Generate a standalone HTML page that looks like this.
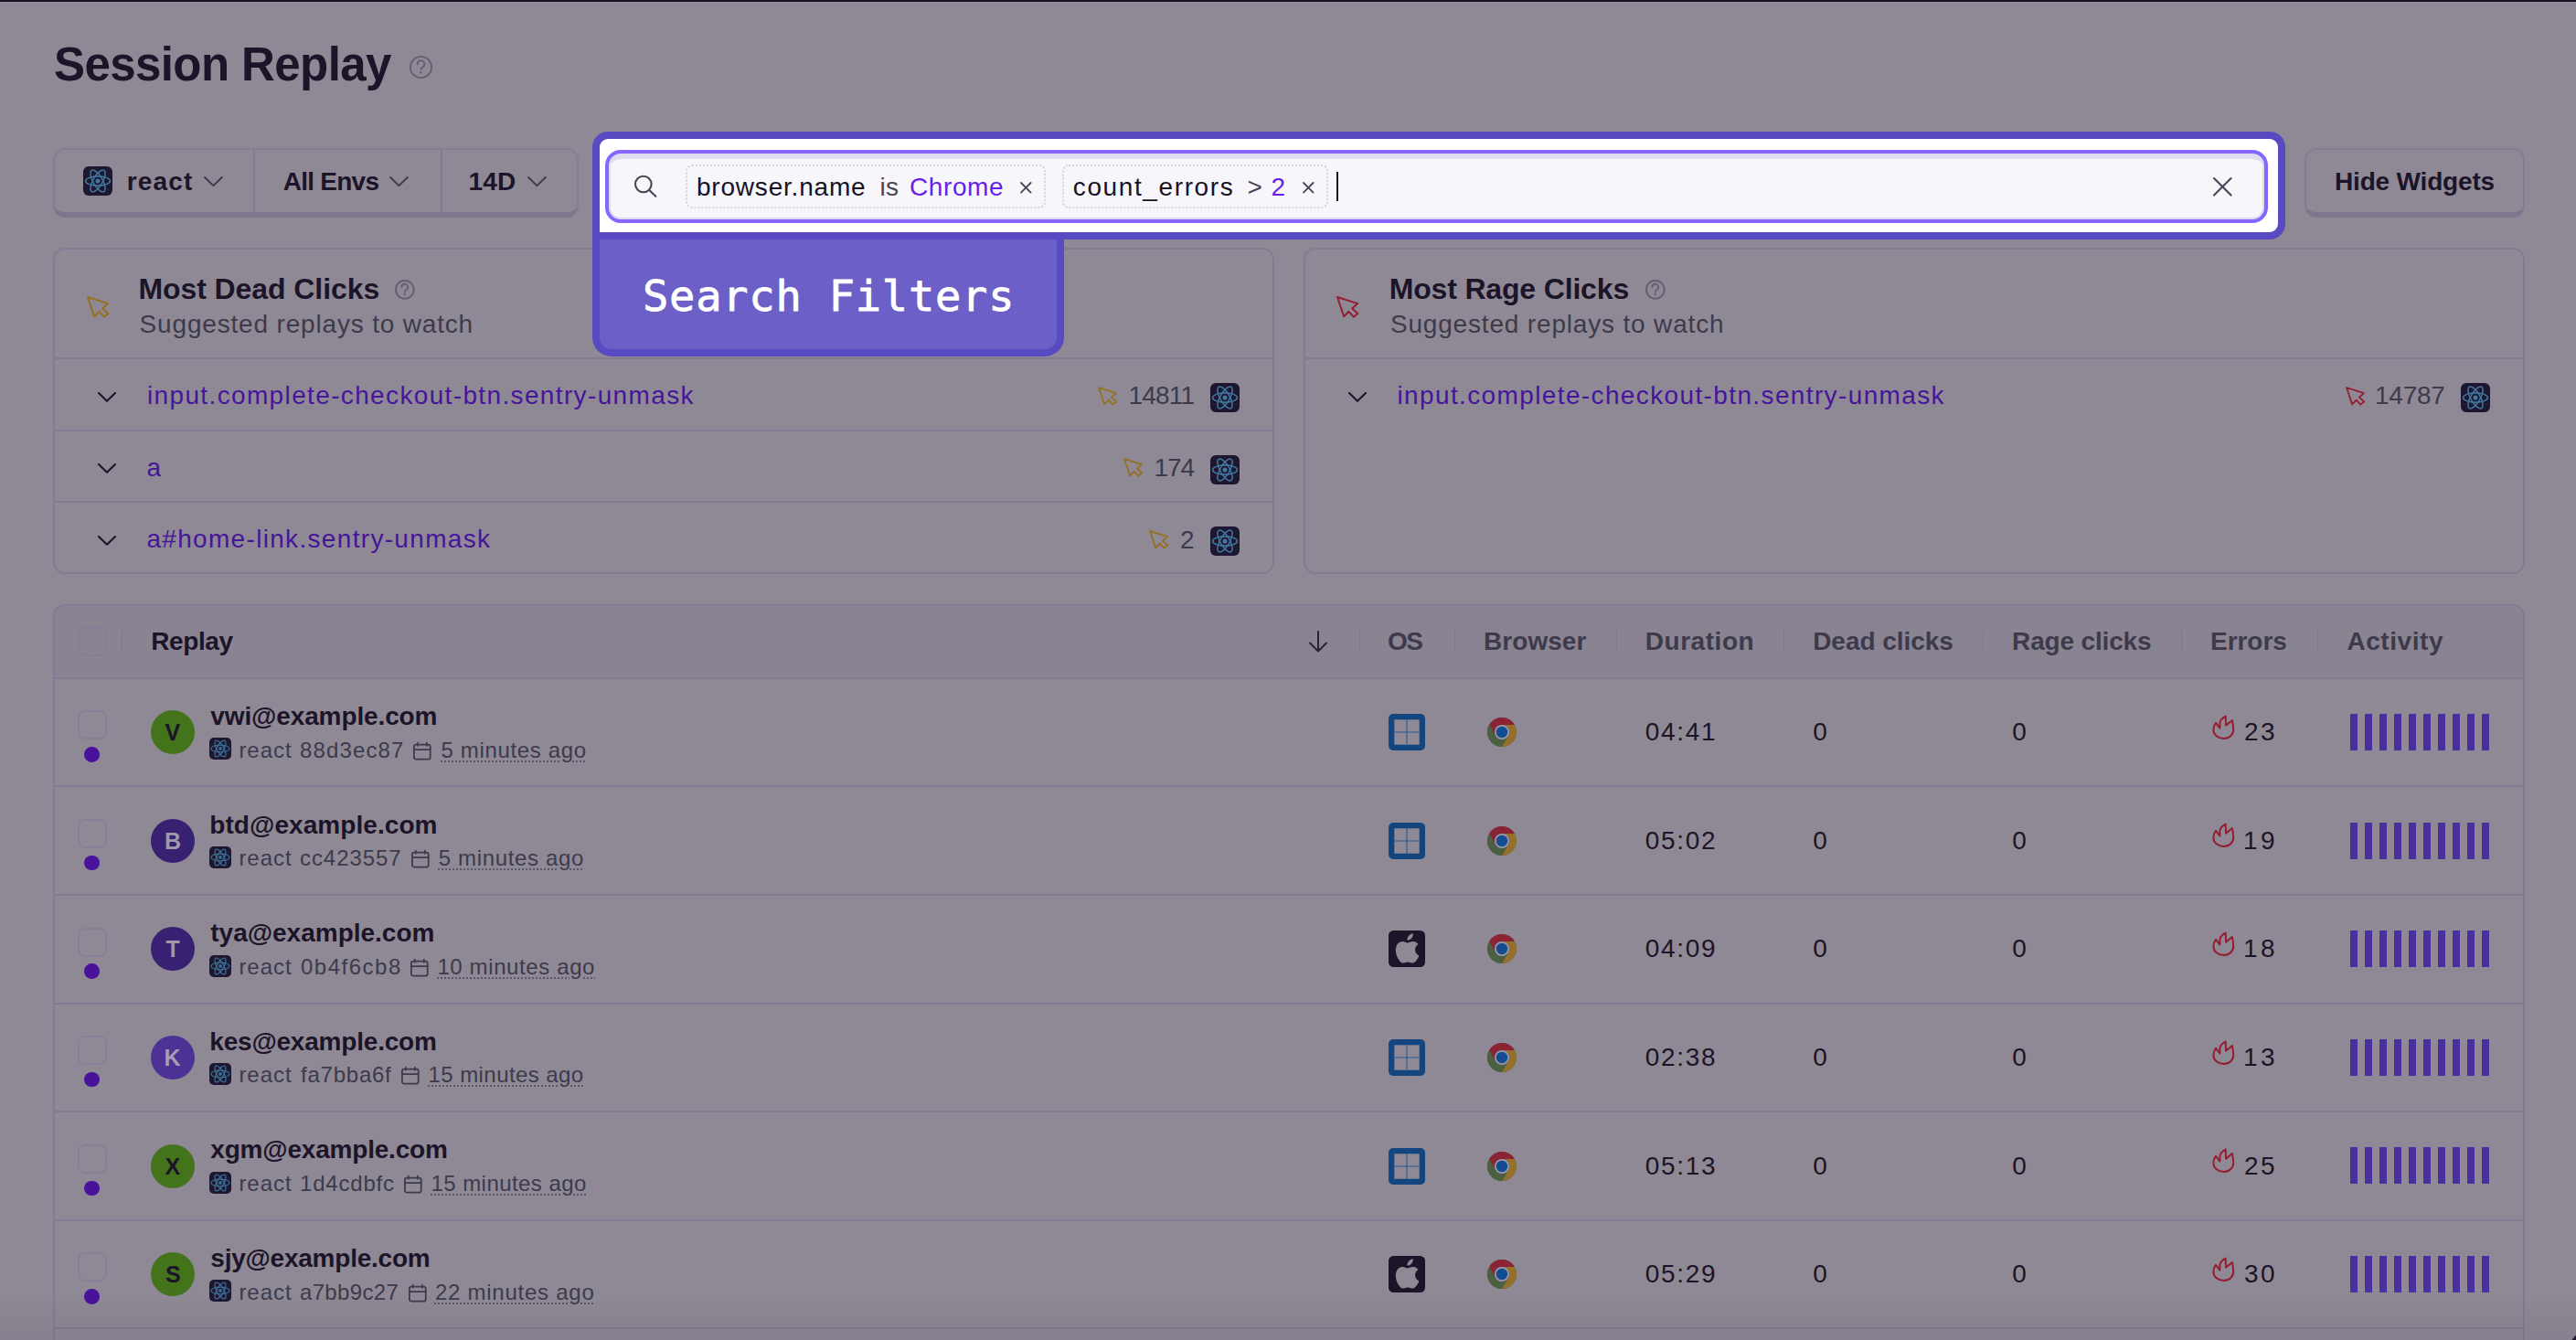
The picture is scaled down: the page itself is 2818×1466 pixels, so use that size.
<!DOCTYPE html>
<html lang="en"><head><meta charset="utf-8"><title>Session Replay</title>
<style>html,body{margin:0;padding:0}body{width:2818px;height:1466px;overflow:hidden;position:relative;background:#8F8995;font-family:'Liberation Sans',sans-serif}svg{overflow:visible}</style></head>
<body>
<div style="position:absolute;left:0px;top:0px;width:2818px;height:1px;background:#1C1424"></div>
<div style="position:absolute;left:0px;top:1px;width:2818px;height:1px;background:#150D1F"></div>
<div style="position:absolute;left:0px;top:2px;width:2818px;height:1px;background:#9993A0"></div>
<svg style="position:absolute;left:445.8px;top:59.0px" width="29.0" height="29.0" viewBox="-14.5 -14.5 29.0 29.0"><circle r="11.6" fill="none" stroke="#645D70" stroke-width="1.8"/><path d="M-3.88 -3.00 a3.88 3.88 0 1 1 5.88 3.00 q-2.00 0.88 -2.00 2.50" fill="none" stroke="#645D70" stroke-width="1.7" stroke-linecap="round"/><circle cy="5.75" r="1.25" fill="#645D70"/></svg>
<div style="position:absolute;left:58px;top:162px;width:575px;height:76px;box-sizing:border-box;border:2px solid #857D95;border-bottom:6px solid #7E768D;border-radius:13px"></div>
<div style="position:absolute;left:277px;top:164px;width:2px;height:68px;background:#837B93"></div>
<div style="position:absolute;left:481.5px;top:164px;width:2px;height:68px;background:#837B93"></div>
<svg style="position:absolute;left:90.5px;top:182px" width="32" height="32" viewBox="0 0 32 32"><rect width="32" height="32" rx="6" fill="#1D1730"/><g fill="none" stroke="#42769E" stroke-width="1.54"><ellipse cx="16.0" cy="16.0" rx="13.44" ry="5.12"/><ellipse cx="16.0" cy="16.0" rx="13.44" ry="5.12" transform="rotate(60 16.0 16.0)"/><ellipse cx="16.0" cy="16.0" rx="13.44" ry="5.12" transform="rotate(120 16.0 16.0)"/></g><circle cx="16.0" cy="16.0" r="2.56" fill="#42769E"/></svg>
<svg style="position:absolute;left:221.8px;top:192.3px" width="22.8" height="13.2" viewBox="-2 -2 22.8 13.2"><path d="M0 0 L9.4 9.2 L18.8 0" fill="none" stroke="#3D3A4C" stroke-width="1.9" stroke-linecap="round" stroke-linejoin="round"/></svg>
<svg style="position:absolute;left:425.4px;top:192.3px" width="22.8" height="13.2" viewBox="-2 -2 22.8 13.2"><path d="M0 0 L9.4 9.2 L18.8 0" fill="none" stroke="#3D3A4C" stroke-width="1.9" stroke-linecap="round" stroke-linejoin="round"/></svg>
<svg style="position:absolute;left:576px;top:192.3px" width="22.8" height="13.2" viewBox="-2 -2 22.8 13.2"><path d="M0 0 L9.4 9.2 L18.8 0" fill="none" stroke="#3D3A4C" stroke-width="1.9" stroke-linecap="round" stroke-linejoin="round"/></svg>
<div style="position:absolute;left:2521px;top:162px;width:241px;height:76px;box-sizing:border-box;border:2px solid #857D95;border-bottom:6px solid #7E768D;border-radius:13px"></div>
<div style="position:absolute;left:58px;top:271px;width:1336px;height:357px;box-sizing:border-box;border:2px solid #837B93;border-radius:13px"></div>
<div style="position:absolute;left:60px;top:391px;width:1332px;height:2px;background:#837B93"></div>
<div style="position:absolute;left:1426px;top:271px;width:1336px;height:357px;box-sizing:border-box;border:2px solid #837B93;border-radius:13px"></div>
<div style="position:absolute;left:1428px;top:391px;width:1332px;height:2px;background:#837B93"></div>
<div style="position:absolute;left:60px;top:470px;width:1332px;height:2px;background:#837B93"></div>
<div style="position:absolute;left:60px;top:548px;width:1332px;height:2px;background:#837B93"></div>
<svg style="position:absolute;left:93.5px;top:323px" width="28.0" height="28.0" viewBox="-2 -2 28.0 28.0"><path d="M0.00 0.00 L22.10 7.10 L16.20 12.40 L22.40 18.00 L17.70 21.70 L12.50 15.80 L7.20 21.40 Z" fill="none" stroke="#94701F" stroke-width="2.00" stroke-linejoin="round"/></svg>
<svg style="position:absolute;left:430.4px;top:303.5px" width="25.6" height="25.6" viewBox="-12.8 -12.8 25.6 25.6"><circle r="9.9" fill="none" stroke="#645D70" stroke-width="1.8"/><path d="M-3.35 -2.59 a3.35 3.35 0 1 1 5.08 2.59 q-1.73 0.76 -1.73 2.16" fill="none" stroke="#645D70" stroke-width="1.7" stroke-linecap="round"/><circle cy="4.97" r="1.25" fill="#645D70"/></svg>
<svg style="position:absolute;left:105.7px;top:427.5px" width="22" height="12.8" viewBox="-2 -2 22 12.8"><path d="M0 0 L9.0 8.8 L18 0" fill="none" stroke="#1C1428" stroke-width="2.1" stroke-linecap="round" stroke-linejoin="round"/></svg>
<svg style="position:absolute;left:1200.2px;top:421.8px" width="24.64" height="24.64" viewBox="-2 -2 24.64 24.64"><path d="M0.00 0.00 L19.01 6.11 L13.93 10.66 L19.26 15.48 L15.22 18.66 L10.75 13.59 L6.19 18.40 Z" fill="none" stroke="#94701F" stroke-width="1.80" stroke-linejoin="round"/></svg>
<svg style="position:absolute;left:1324px;top:419.4px" width="32" height="32" viewBox="0 0 32 32"><rect width="32" height="32" rx="6" fill="#1D1730"/><g fill="none" stroke="#42769E" stroke-width="1.54"><ellipse cx="16.0" cy="16.0" rx="13.44" ry="5.12"/><ellipse cx="16.0" cy="16.0" rx="13.44" ry="5.12" transform="rotate(60 16.0 16.0)"/><ellipse cx="16.0" cy="16.0" rx="13.44" ry="5.12" transform="rotate(120 16.0 16.0)"/></g><circle cx="16.0" cy="16.0" r="2.56" fill="#42769E"/></svg>
<svg style="position:absolute;left:105.7px;top:506.0px" width="22" height="12.8" viewBox="-2 -2 22 12.8"><path d="M0 0 L9.0 8.8 L18 0" fill="none" stroke="#1C1428" stroke-width="2.1" stroke-linecap="round" stroke-linejoin="round"/></svg>
<svg style="position:absolute;left:1228.4px;top:500.3px" width="24.64" height="24.64" viewBox="-2 -2 24.64 24.64"><path d="M0.00 0.00 L19.01 6.11 L13.93 10.66 L19.26 15.48 L15.22 18.66 L10.75 13.59 L6.19 18.40 Z" fill="none" stroke="#94701F" stroke-width="1.80" stroke-linejoin="round"/></svg>
<svg style="position:absolute;left:1324px;top:497.9px" width="32" height="32" viewBox="0 0 32 32"><rect width="32" height="32" rx="6" fill="#1D1730"/><g fill="none" stroke="#42769E" stroke-width="1.54"><ellipse cx="16.0" cy="16.0" rx="13.44" ry="5.12"/><ellipse cx="16.0" cy="16.0" rx="13.44" ry="5.12" transform="rotate(60 16.0 16.0)"/><ellipse cx="16.0" cy="16.0" rx="13.44" ry="5.12" transform="rotate(120 16.0 16.0)"/></g><circle cx="16.0" cy="16.0" r="2.56" fill="#42769E"/></svg>
<svg style="position:absolute;left:105.7px;top:584.5px" width="22" height="12.8" viewBox="-2 -2 22 12.8"><path d="M0 0 L9.0 8.8 L18 0" fill="none" stroke="#1C1428" stroke-width="2.1" stroke-linecap="round" stroke-linejoin="round"/></svg>
<svg style="position:absolute;left:1255.7px;top:578.8000000000001px" width="24.64" height="24.64" viewBox="-2 -2 24.64 24.64"><path d="M0.00 0.00 L19.01 6.11 L13.93 10.66 L19.26 15.48 L15.22 18.66 L10.75 13.59 L6.19 18.40 Z" fill="none" stroke="#94701F" stroke-width="1.80" stroke-linejoin="round"/></svg>
<svg style="position:absolute;left:1324px;top:576.4000000000001px" width="32" height="32" viewBox="0 0 32 32"><rect width="32" height="32" rx="6" fill="#1D1730"/><g fill="none" stroke="#42769E" stroke-width="1.54"><ellipse cx="16.0" cy="16.0" rx="13.44" ry="5.12"/><ellipse cx="16.0" cy="16.0" rx="13.44" ry="5.12" transform="rotate(60 16.0 16.0)"/><ellipse cx="16.0" cy="16.0" rx="13.44" ry="5.12" transform="rotate(120 16.0 16.0)"/></g><circle cx="16.0" cy="16.0" r="2.56" fill="#42769E"/></svg>
<svg style="position:absolute;left:1461.3px;top:323px" width="28.0" height="28.0" viewBox="-2 -2 28.0 28.0"><path d="M0.00 0.00 L22.10 7.10 L16.20 12.40 L22.40 18.00 L17.70 21.70 L12.50 15.80 L7.20 21.40 Z" fill="none" stroke="#951D32" stroke-width="2.00" stroke-linejoin="round"/></svg>
<svg style="position:absolute;left:1797.5px;top:303.5px" width="25.6" height="25.6" viewBox="-12.8 -12.8 25.6 25.6"><circle r="9.9" fill="none" stroke="#645D70" stroke-width="1.8"/><path d="M-3.35 -2.59 a3.35 3.35 0 1 1 5.08 2.59 q-1.73 0.76 -1.73 2.16" fill="none" stroke="#645D70" stroke-width="1.7" stroke-linecap="round"/><circle cy="4.97" r="1.25" fill="#645D70"/></svg>
<svg style="position:absolute;left:1473.8px;top:427.5px" width="22" height="12.8" viewBox="-2 -2 22 12.8"><path d="M0 0 L9.0 8.8 L18 0" fill="none" stroke="#1C1428" stroke-width="2.1" stroke-linecap="round" stroke-linejoin="round"/></svg>
<svg style="position:absolute;left:2564.5px;top:422.0px" width="24.64" height="24.64" viewBox="-2 -2 24.64 24.64"><path d="M0.00 0.00 L19.01 6.11 L13.93 10.66 L19.26 15.48 L15.22 18.66 L10.75 13.59 L6.19 18.40 Z" fill="none" stroke="#951D32" stroke-width="1.80" stroke-linejoin="round"/></svg>
<svg style="position:absolute;left:2691.5px;top:419.4px" width="32" height="32" viewBox="0 0 32 32"><rect width="32" height="32" rx="6" fill="#1D1730"/><g fill="none" stroke="#42769E" stroke-width="1.54"><ellipse cx="16.0" cy="16.0" rx="13.44" ry="5.12"/><ellipse cx="16.0" cy="16.0" rx="13.44" ry="5.12" transform="rotate(60 16.0 16.0)"/><ellipse cx="16.0" cy="16.0" rx="13.44" ry="5.12" transform="rotate(120 16.0 16.0)"/></g><circle cx="16.0" cy="16.0" r="2.56" fill="#42769E"/></svg>
<div style="position:absolute;left:58px;top:661px;width:2704px;height:900px;box-sizing:border-box;border:2px solid #837B93;border-radius:13px"></div>
<div style="position:absolute;left:60px;top:663px;width:2700px;height:78px;background:#8A8391;border-radius:11px 11px 0 0"></div>
<div style="position:absolute;left:60px;top:741px;width:2700px;height:2px;background:#837B93"></div>
<div style="position:absolute;left:84.5px;top:685.7px;width:28px;height:28px;border:2px solid #857C97;border-radius:8px;opacity:.75"></div>
<div style="position:absolute;left:133px;top:688.5px;width:1.2px;height:26.5px;background:#7F778D"></div>
<div style="position:absolute;left:1486.5px;top:688.5px;width:1.2px;height:26.5px;background:#7F778D"></div>
<div style="position:absolute;left:1591px;top:688.5px;width:1.2px;height:26.5px;background:#7F778D"></div>
<div style="position:absolute;left:1768px;top:688.5px;width:1.2px;height:26.5px;background:#7F778D"></div>
<div style="position:absolute;left:1951px;top:688.5px;width:1.2px;height:26.5px;background:#7F778D"></div>
<div style="position:absolute;left:2169.3px;top:688.5px;width:1.2px;height:26.5px;background:#7F778D"></div>
<div style="position:absolute;left:2386px;top:688.5px;width:1.2px;height:26.5px;background:#7F778D"></div>
<div style="position:absolute;left:2535.3px;top:688.5px;width:1.2px;height:26.5px;background:#7F778D"></div>
<svg style="position:absolute;left:1430px;top:689px" width="24" height="26" viewBox="0 0 24 26"><path d="M12 2V23M3 14.500L12 23.500L21 14.500" fill="none" stroke="#2A2338" stroke-width="2" stroke-linecap="round" stroke-linejoin="round"/></svg>
<div style="position:absolute;left:84.5px;top:777.4px;width:28px;height:28px;border:2px solid #857C97;border-radius:8px;opacity:.75"></div>
<div style="position:absolute;left:92.2px;top:817.1px;width:16.6px;height:16.6px;background:#48129A;border-radius:50%"></div>
<div style="position:absolute;left:165px;top:777.1px;width:48px;height:48px;background:#43731A;border-radius:50%"></div>
<svg style="position:absolute;left:229.3px;top:807.3px" width="24" height="24" viewBox="0 0 24 24"><rect width="24" height="24" rx="5" fill="#1D1730"/><g fill="none" stroke="#3D7098" stroke-width="1.20"><ellipse cx="12.0" cy="12.0" rx="10.08" ry="3.84"/><ellipse cx="12.0" cy="12.0" rx="10.08" ry="3.84" transform="rotate(60 12.0 12.0)"/><ellipse cx="12.0" cy="12.0" rx="10.08" ry="3.84" transform="rotate(120 12.0 12.0)"/></g><circle cx="12.0" cy="12.0" r="1.92" fill="#3D7098"/></svg>
<svg style="position:absolute;left:452.3px;top:811.6px" width="20" height="20" viewBox="0 0 20 20"><rect x="0.9" y="2.6" width="17.8" height="16" rx="2.2" fill="none" stroke="#3D3A4C" stroke-width="1.8"/><path d="M0.9 8.100H18.700M4.800 0.600V3.800M14.800 0.600V3.800" stroke="#3D3A4C" stroke-width="1.7" fill="none" stroke-linecap="round"/></svg>
<svg style="position:absolute;left:1518.6px;top:781.1px" width="40" height="40" viewBox="0 0 40 40"><rect width="40" height="40" rx="5" fill="#13467F"/><rect x="6.3" y="6.3" width="27.4" height="27.4" fill="#8F8995"/><path d="M20 6.3V33.7M6.3 20H33.7" stroke="#2A5A8E" stroke-width="1.1" fill="none"/></svg>
<svg style="position:absolute;left:1626.2px;top:784.1px" width="34" height="34" viewBox="-17 -17 34 34"><circle r="16" fill="#4D5A4A"/><path d="M-13.86 -8.00 A16 16 0 0 1 13.86 -8.00 L0.00 -8.00 A8.0 8.0 0 0 0 -6.93 4.00 Z" fill="#8A2435"/><path d="M13.86 -8.00 A16 16 0 0 1 -0.00 16.00 L6.93 4.00 A8.0 8.0 0 0 0 0.00 -8.00 Z" fill="#94702C"/><path d="M-0.00 16.00 A16 16 0 0 1 -13.86 -8.00 L-6.93 4.00 A8.0 8.0 0 0 0 6.93 4.00 Z" fill="#4A6040"/><circle r="8.0" fill="#9C96AC"/><circle r="6.24" fill="#134C90"/></svg>
<svg style="position:absolute;left:2418.8px;top:780.7px" width="28" height="30" viewBox="-2 -2 28 30"><path d="M13.7 0.6 C10 2.5 7.4 5.5 7.4 8.5 L7.4 13.6 L3 7.8 C1.2 10 0.4 12.6 0.4 15.4 C0.4 21 5.6 25 11.6 25 C17.8 25 22.6 20.6 22.2 14.6 C22 11 21.6 8 20.9 5 L14 10.6 Z" fill="none" stroke="#951D32" stroke-width="2" stroke-linejoin="round"/></svg>
<div style="position:absolute;left:2571px;top:781px;width:8px;height:40px;background:#4B2F9E"></div>
<div style="position:absolute;left:2587px;top:781px;width:8px;height:40px;background:#4B2F9E"></div>
<div style="position:absolute;left:2603px;top:781px;width:8px;height:40px;background:#4B2F9E"></div>
<div style="position:absolute;left:2619px;top:781px;width:8px;height:40px;background:#4B2F9E"></div>
<div style="position:absolute;left:2635px;top:781px;width:8px;height:40px;background:#4B2F9E"></div>
<div style="position:absolute;left:2651px;top:781px;width:8px;height:40px;background:#4B2F9E"></div>
<div style="position:absolute;left:2667px;top:781px;width:8px;height:40px;background:#4B2F9E"></div>
<div style="position:absolute;left:2683px;top:781px;width:8px;height:40px;background:#4B2F9E"></div>
<div style="position:absolute;left:2699px;top:781px;width:8px;height:40px;background:#4B2F9E"></div>
<div style="position:absolute;left:2715px;top:781px;width:8px;height:40px;background:#4B2F9E"></div>
<div style="position:absolute;left:60px;top:859px;width:2700px;height:2px;background:#837B93"></div>
<div style="position:absolute;left:84.5px;top:896.0px;width:28px;height:28px;border:2px solid #857C97;border-radius:8px;opacity:.75"></div>
<div style="position:absolute;left:92.2px;top:935.7px;width:16.6px;height:16.6px;background:#48129A;border-radius:50%"></div>
<div style="position:absolute;left:165px;top:895.7px;width:48px;height:48px;background:#382072;border-radius:50%"></div>
<svg style="position:absolute;left:229.3px;top:925.9px" width="24" height="24" viewBox="0 0 24 24"><rect width="24" height="24" rx="5" fill="#1D1730"/><g fill="none" stroke="#3D7098" stroke-width="1.20"><ellipse cx="12.0" cy="12.0" rx="10.08" ry="3.84"/><ellipse cx="12.0" cy="12.0" rx="10.08" ry="3.84" transform="rotate(60 12.0 12.0)"/><ellipse cx="12.0" cy="12.0" rx="10.08" ry="3.84" transform="rotate(120 12.0 12.0)"/></g><circle cx="12.0" cy="12.0" r="1.92" fill="#3D7098"/></svg>
<svg style="position:absolute;left:449.6px;top:930.2px" width="20" height="20" viewBox="0 0 20 20"><rect x="0.9" y="2.6" width="17.8" height="16" rx="2.2" fill="none" stroke="#3D3A4C" stroke-width="1.8"/><path d="M0.9 8.100H18.700M4.800 0.600V3.800M14.800 0.600V3.800" stroke="#3D3A4C" stroke-width="1.7" fill="none" stroke-linecap="round"/></svg>
<svg style="position:absolute;left:1518.6px;top:899.7px" width="40" height="40" viewBox="0 0 40 40"><rect width="40" height="40" rx="5" fill="#13467F"/><rect x="6.3" y="6.3" width="27.4" height="27.4" fill="#8F8995"/><path d="M20 6.3V33.7M6.3 20H33.7" stroke="#2A5A8E" stroke-width="1.1" fill="none"/></svg>
<svg style="position:absolute;left:1626.2px;top:902.7px" width="34" height="34" viewBox="-17 -17 34 34"><circle r="16" fill="#4D5A4A"/><path d="M-13.86 -8.00 A16 16 0 0 1 13.86 -8.00 L0.00 -8.00 A8.0 8.0 0 0 0 -6.93 4.00 Z" fill="#8A2435"/><path d="M13.86 -8.00 A16 16 0 0 1 -0.00 16.00 L6.93 4.00 A8.0 8.0 0 0 0 0.00 -8.00 Z" fill="#94702C"/><path d="M-0.00 16.00 A16 16 0 0 1 -13.86 -8.00 L-6.93 4.00 A8.0 8.0 0 0 0 6.93 4.00 Z" fill="#4A6040"/><circle r="8.0" fill="#9C96AC"/><circle r="6.24" fill="#134C90"/></svg>
<svg style="position:absolute;left:2418.8px;top:899.3px" width="28" height="30" viewBox="-2 -2 28 30"><path d="M13.7 0.6 C10 2.5 7.4 5.5 7.4 8.5 L7.4 13.6 L3 7.8 C1.2 10 0.4 12.6 0.4 15.4 C0.4 21 5.6 25 11.6 25 C17.8 25 22.6 20.6 22.2 14.6 C22 11 21.6 8 20.9 5 L14 10.6 Z" fill="none" stroke="#951D32" stroke-width="2" stroke-linejoin="round"/></svg>
<div style="position:absolute;left:2571px;top:900px;width:8px;height:40px;background:#4B2F9E"></div>
<div style="position:absolute;left:2587px;top:900px;width:8px;height:40px;background:#4B2F9E"></div>
<div style="position:absolute;left:2603px;top:900px;width:8px;height:40px;background:#4B2F9E"></div>
<div style="position:absolute;left:2619px;top:900px;width:8px;height:40px;background:#4B2F9E"></div>
<div style="position:absolute;left:2635px;top:900px;width:8px;height:40px;background:#4B2F9E"></div>
<div style="position:absolute;left:2651px;top:900px;width:8px;height:40px;background:#4B2F9E"></div>
<div style="position:absolute;left:2667px;top:900px;width:8px;height:40px;background:#4B2F9E"></div>
<div style="position:absolute;left:2683px;top:900px;width:8px;height:40px;background:#4B2F9E"></div>
<div style="position:absolute;left:2699px;top:900px;width:8px;height:40px;background:#4B2F9E"></div>
<div style="position:absolute;left:2715px;top:900px;width:8px;height:40px;background:#4B2F9E"></div>
<div style="position:absolute;left:60px;top:978px;width:2700px;height:2px;background:#837B93"></div>
<div style="position:absolute;left:84.5px;top:1014.6px;width:28px;height:28px;border:2px solid #857C97;border-radius:8px;opacity:.75"></div>
<div style="position:absolute;left:92.2px;top:1054.3px;width:16.6px;height:16.6px;background:#48129A;border-radius:50%"></div>
<div style="position:absolute;left:165px;top:1014.3px;width:48px;height:48px;background:#382072;border-radius:50%"></div>
<svg style="position:absolute;left:229.3px;top:1044.5px" width="24" height="24" viewBox="0 0 24 24"><rect width="24" height="24" rx="5" fill="#1D1730"/><g fill="none" stroke="#3D7098" stroke-width="1.20"><ellipse cx="12.0" cy="12.0" rx="10.08" ry="3.84"/><ellipse cx="12.0" cy="12.0" rx="10.08" ry="3.84" transform="rotate(60 12.0 12.0)"/><ellipse cx="12.0" cy="12.0" rx="10.08" ry="3.84" transform="rotate(120 12.0 12.0)"/></g><circle cx="12.0" cy="12.0" r="1.92" fill="#3D7098"/></svg>
<svg style="position:absolute;left:449.2px;top:1048.8px" width="20" height="20" viewBox="0 0 20 20"><rect x="0.9" y="2.6" width="17.8" height="16" rx="2.2" fill="none" stroke="#3D3A4C" stroke-width="1.8"/><path d="M0.9 8.100H18.700M4.800 0.600V3.800M14.800 0.600V3.800" stroke="#3D3A4C" stroke-width="1.7" fill="none" stroke-linecap="round"/></svg>
<svg style="position:absolute;left:1518.6px;top:1018.3px" width="40" height="40" viewBox="0 0 40 40"><rect width="40" height="40" rx="5.5" fill="#1C1428"/><g transform="translate(-7.5 -7.6) scale(1.346)" fill="#8F8995"><path d="M27.2 21.3c0-3 2.4-4.4 2.5-4.5-1.4-2-3.500-2.300-4.300-2.300-1.800-.2-3.500 1.100-4.500 1.100-.9 0-2.300-1-3.800-1-2 0-3.800 1.100-4.800 2.900-2 3.600-.5 8.800 1.500 11.700 1 1.400 2.100 3 3.700 2.900 1.500-.1 2-.9 3.800-.9s2.300.9 3.800.9c1.600 0 2.600-1.400 3.600-2.800 1.100-1.600 1.600-3.200 1.600-3.300-.1 0-3.100-1.200-3.100-4.700z"/><path d="M24.300 11.900c.8-1 1.400-2.400 1.200-3.800-1.200.1-2.600.8-3.500 1.800-.8.900-1.400 2.300-1.200 3.600 1.300.1 2.700-.6 3.500-1.600z"/></g></svg>
<svg style="position:absolute;left:1626.2px;top:1021.3px" width="34" height="34" viewBox="-17 -17 34 34"><circle r="16" fill="#4D5A4A"/><path d="M-13.86 -8.00 A16 16 0 0 1 13.86 -8.00 L0.00 -8.00 A8.0 8.0 0 0 0 -6.93 4.00 Z" fill="#8A2435"/><path d="M13.86 -8.00 A16 16 0 0 1 -0.00 16.00 L6.93 4.00 A8.0 8.0 0 0 0 0.00 -8.00 Z" fill="#94702C"/><path d="M-0.00 16.00 A16 16 0 0 1 -13.86 -8.00 L-6.93 4.00 A8.0 8.0 0 0 0 6.93 4.00 Z" fill="#4A6040"/><circle r="8.0" fill="#9C96AC"/><circle r="6.24" fill="#134C90"/></svg>
<svg style="position:absolute;left:2418.8px;top:1017.9px" width="28" height="30" viewBox="-2 -2 28 30"><path d="M13.7 0.6 C10 2.5 7.4 5.5 7.4 8.5 L7.4 13.6 L3 7.8 C1.2 10 0.4 12.6 0.4 15.4 C0.4 21 5.6 25 11.6 25 C17.8 25 22.6 20.6 22.2 14.6 C22 11 21.6 8 20.9 5 L14 10.6 Z" fill="none" stroke="#951D32" stroke-width="2" stroke-linejoin="round"/></svg>
<div style="position:absolute;left:2571px;top:1018px;width:8px;height:40px;background:#4B2F9E"></div>
<div style="position:absolute;left:2587px;top:1018px;width:8px;height:40px;background:#4B2F9E"></div>
<div style="position:absolute;left:2603px;top:1018px;width:8px;height:40px;background:#4B2F9E"></div>
<div style="position:absolute;left:2619px;top:1018px;width:8px;height:40px;background:#4B2F9E"></div>
<div style="position:absolute;left:2635px;top:1018px;width:8px;height:40px;background:#4B2F9E"></div>
<div style="position:absolute;left:2651px;top:1018px;width:8px;height:40px;background:#4B2F9E"></div>
<div style="position:absolute;left:2667px;top:1018px;width:8px;height:40px;background:#4B2F9E"></div>
<div style="position:absolute;left:2683px;top:1018px;width:8px;height:40px;background:#4B2F9E"></div>
<div style="position:absolute;left:2699px;top:1018px;width:8px;height:40px;background:#4B2F9E"></div>
<div style="position:absolute;left:2715px;top:1018px;width:8px;height:40px;background:#4B2F9E"></div>
<div style="position:absolute;left:60px;top:1097px;width:2700px;height:2px;background:#837B93"></div>
<div style="position:absolute;left:84.5px;top:1133.2px;width:28px;height:28px;border:2px solid #857C97;border-radius:8px;opacity:.75"></div>
<div style="position:absolute;left:92.2px;top:1172.9px;width:16.6px;height:16.6px;background:#48129A;border-radius:50%"></div>
<div style="position:absolute;left:165px;top:1132.9px;width:48px;height:48px;background:#4C3294;border-radius:50%"></div>
<svg style="position:absolute;left:229.3px;top:1163.1px" width="24" height="24" viewBox="0 0 24 24"><rect width="24" height="24" rx="5" fill="#1D1730"/><g fill="none" stroke="#3D7098" stroke-width="1.20"><ellipse cx="12.0" cy="12.0" rx="10.08" ry="3.84"/><ellipse cx="12.0" cy="12.0" rx="10.08" ry="3.84" transform="rotate(60 12.0 12.0)"/><ellipse cx="12.0" cy="12.0" rx="10.08" ry="3.84" transform="rotate(120 12.0 12.0)"/></g><circle cx="12.0" cy="12.0" r="1.92" fill="#3D7098"/></svg>
<svg style="position:absolute;left:439.4px;top:1167.4px" width="20" height="20" viewBox="0 0 20 20"><rect x="0.9" y="2.6" width="17.8" height="16" rx="2.2" fill="none" stroke="#3D3A4C" stroke-width="1.8"/><path d="M0.9 8.100H18.700M4.800 0.600V3.800M14.800 0.600V3.800" stroke="#3D3A4C" stroke-width="1.7" fill="none" stroke-linecap="round"/></svg>
<svg style="position:absolute;left:1518.6px;top:1136.9px" width="40" height="40" viewBox="0 0 40 40"><rect width="40" height="40" rx="5" fill="#13467F"/><rect x="6.3" y="6.3" width="27.4" height="27.4" fill="#8F8995"/><path d="M20 6.3V33.7M6.3 20H33.7" stroke="#2A5A8E" stroke-width="1.1" fill="none"/></svg>
<svg style="position:absolute;left:1626.2px;top:1139.9px" width="34" height="34" viewBox="-17 -17 34 34"><circle r="16" fill="#4D5A4A"/><path d="M-13.86 -8.00 A16 16 0 0 1 13.86 -8.00 L0.00 -8.00 A8.0 8.0 0 0 0 -6.93 4.00 Z" fill="#8A2435"/><path d="M13.86 -8.00 A16 16 0 0 1 -0.00 16.00 L6.93 4.00 A8.0 8.0 0 0 0 0.00 -8.00 Z" fill="#94702C"/><path d="M-0.00 16.00 A16 16 0 0 1 -13.86 -8.00 L-6.93 4.00 A8.0 8.0 0 0 0 6.93 4.00 Z" fill="#4A6040"/><circle r="8.0" fill="#9C96AC"/><circle r="6.24" fill="#134C90"/></svg>
<svg style="position:absolute;left:2418.8px;top:1136.5px" width="28" height="30" viewBox="-2 -2 28 30"><path d="M13.7 0.6 C10 2.5 7.4 5.5 7.4 8.5 L7.4 13.6 L3 7.8 C1.2 10 0.4 12.6 0.4 15.4 C0.4 21 5.6 25 11.6 25 C17.8 25 22.6 20.6 22.2 14.6 C22 11 21.6 8 20.9 5 L14 10.6 Z" fill="none" stroke="#951D32" stroke-width="2" stroke-linejoin="round"/></svg>
<div style="position:absolute;left:2571px;top:1137px;width:8px;height:40px;background:#4B2F9E"></div>
<div style="position:absolute;left:2587px;top:1137px;width:8px;height:40px;background:#4B2F9E"></div>
<div style="position:absolute;left:2603px;top:1137px;width:8px;height:40px;background:#4B2F9E"></div>
<div style="position:absolute;left:2619px;top:1137px;width:8px;height:40px;background:#4B2F9E"></div>
<div style="position:absolute;left:2635px;top:1137px;width:8px;height:40px;background:#4B2F9E"></div>
<div style="position:absolute;left:2651px;top:1137px;width:8px;height:40px;background:#4B2F9E"></div>
<div style="position:absolute;left:2667px;top:1137px;width:8px;height:40px;background:#4B2F9E"></div>
<div style="position:absolute;left:2683px;top:1137px;width:8px;height:40px;background:#4B2F9E"></div>
<div style="position:absolute;left:2699px;top:1137px;width:8px;height:40px;background:#4B2F9E"></div>
<div style="position:absolute;left:2715px;top:1137px;width:8px;height:40px;background:#4B2F9E"></div>
<div style="position:absolute;left:60px;top:1215px;width:2700px;height:2px;background:#837B93"></div>
<div style="position:absolute;left:84.5px;top:1251.8px;width:28px;height:28px;border:2px solid #857C97;border-radius:8px;opacity:.75"></div>
<div style="position:absolute;left:92.2px;top:1291.5px;width:16.6px;height:16.6px;background:#48129A;border-radius:50%"></div>
<div style="position:absolute;left:165px;top:1251.5px;width:48px;height:48px;background:#43731A;border-radius:50%"></div>
<svg style="position:absolute;left:229.3px;top:1281.7px" width="24" height="24" viewBox="0 0 24 24"><rect width="24" height="24" rx="5" fill="#1D1730"/><g fill="none" stroke="#3D7098" stroke-width="1.20"><ellipse cx="12.0" cy="12.0" rx="10.08" ry="3.84"/><ellipse cx="12.0" cy="12.0" rx="10.08" ry="3.84" transform="rotate(60 12.0 12.0)"/><ellipse cx="12.0" cy="12.0" rx="10.08" ry="3.84" transform="rotate(120 12.0 12.0)"/></g><circle cx="12.0" cy="12.0" r="1.92" fill="#3D7098"/></svg>
<svg style="position:absolute;left:442.3px;top:1286.0px" width="20" height="20" viewBox="0 0 20 20"><rect x="0.9" y="2.6" width="17.8" height="16" rx="2.2" fill="none" stroke="#3D3A4C" stroke-width="1.8"/><path d="M0.9 8.100H18.700M4.800 0.600V3.800M14.800 0.600V3.800" stroke="#3D3A4C" stroke-width="1.7" fill="none" stroke-linecap="round"/></svg>
<svg style="position:absolute;left:1518.6px;top:1255.5px" width="40" height="40" viewBox="0 0 40 40"><rect width="40" height="40" rx="5" fill="#13467F"/><rect x="6.3" y="6.3" width="27.4" height="27.4" fill="#8F8995"/><path d="M20 6.3V33.7M6.3 20H33.7" stroke="#2A5A8E" stroke-width="1.1" fill="none"/></svg>
<svg style="position:absolute;left:1626.2px;top:1258.5px" width="34" height="34" viewBox="-17 -17 34 34"><circle r="16" fill="#4D5A4A"/><path d="M-13.86 -8.00 A16 16 0 0 1 13.86 -8.00 L0.00 -8.00 A8.0 8.0 0 0 0 -6.93 4.00 Z" fill="#8A2435"/><path d="M13.86 -8.00 A16 16 0 0 1 -0.00 16.00 L6.93 4.00 A8.0 8.0 0 0 0 0.00 -8.00 Z" fill="#94702C"/><path d="M-0.00 16.00 A16 16 0 0 1 -13.86 -8.00 L-6.93 4.00 A8.0 8.0 0 0 0 6.93 4.00 Z" fill="#4A6040"/><circle r="8.0" fill="#9C96AC"/><circle r="6.24" fill="#134C90"/></svg>
<svg style="position:absolute;left:2418.8px;top:1255.1px" width="28" height="30" viewBox="-2 -2 28 30"><path d="M13.7 0.6 C10 2.5 7.4 5.5 7.4 8.5 L7.4 13.6 L3 7.8 C1.2 10 0.4 12.6 0.4 15.4 C0.4 21 5.6 25 11.6 25 C17.8 25 22.6 20.6 22.2 14.6 C22 11 21.6 8 20.9 5 L14 10.6 Z" fill="none" stroke="#951D32" stroke-width="2" stroke-linejoin="round"/></svg>
<div style="position:absolute;left:2571px;top:1255px;width:8px;height:40px;background:#4B2F9E"></div>
<div style="position:absolute;left:2587px;top:1255px;width:8px;height:40px;background:#4B2F9E"></div>
<div style="position:absolute;left:2603px;top:1255px;width:8px;height:40px;background:#4B2F9E"></div>
<div style="position:absolute;left:2619px;top:1255px;width:8px;height:40px;background:#4B2F9E"></div>
<div style="position:absolute;left:2635px;top:1255px;width:8px;height:40px;background:#4B2F9E"></div>
<div style="position:absolute;left:2651px;top:1255px;width:8px;height:40px;background:#4B2F9E"></div>
<div style="position:absolute;left:2667px;top:1255px;width:8px;height:40px;background:#4B2F9E"></div>
<div style="position:absolute;left:2683px;top:1255px;width:8px;height:40px;background:#4B2F9E"></div>
<div style="position:absolute;left:2699px;top:1255px;width:8px;height:40px;background:#4B2F9E"></div>
<div style="position:absolute;left:2715px;top:1255px;width:8px;height:40px;background:#4B2F9E"></div>
<div style="position:absolute;left:60px;top:1334px;width:2700px;height:2px;background:#837B93"></div>
<div style="position:absolute;left:84.5px;top:1370.4px;width:28px;height:28px;border:2px solid #857C97;border-radius:8px;opacity:.75"></div>
<div style="position:absolute;left:92.2px;top:1410.1px;width:16.6px;height:16.6px;background:#48129A;border-radius:50%"></div>
<div style="position:absolute;left:165px;top:1370.1px;width:48px;height:48px;background:#43731A;border-radius:50%"></div>
<svg style="position:absolute;left:229.3px;top:1400.3px" width="24" height="24" viewBox="0 0 24 24"><rect width="24" height="24" rx="5" fill="#1D1730"/><g fill="none" stroke="#3D7098" stroke-width="1.20"><ellipse cx="12.0" cy="12.0" rx="10.08" ry="3.84"/><ellipse cx="12.0" cy="12.0" rx="10.08" ry="3.84" transform="rotate(60 12.0 12.0)"/><ellipse cx="12.0" cy="12.0" rx="10.08" ry="3.84" transform="rotate(120 12.0 12.0)"/></g><circle cx="12.0" cy="12.0" r="1.92" fill="#3D7098"/></svg>
<svg style="position:absolute;left:446.7px;top:1404.6px" width="20" height="20" viewBox="0 0 20 20"><rect x="0.9" y="2.6" width="17.8" height="16" rx="2.2" fill="none" stroke="#3D3A4C" stroke-width="1.8"/><path d="M0.9 8.100H18.700M4.800 0.600V3.800M14.800 0.600V3.800" stroke="#3D3A4C" stroke-width="1.7" fill="none" stroke-linecap="round"/></svg>
<svg style="position:absolute;left:1518.6px;top:1374.1px" width="40" height="40" viewBox="0 0 40 40"><rect width="40" height="40" rx="5.5" fill="#1C1428"/><g transform="translate(-7.5 -7.6) scale(1.346)" fill="#8F8995"><path d="M27.2 21.3c0-3 2.4-4.4 2.5-4.5-1.4-2-3.500-2.300-4.300-2.300-1.800-.2-3.500 1.100-4.500 1.100-.9 0-2.300-1-3.800-1-2 0-3.800 1.100-4.800 2.900-2 3.600-.5 8.800 1.500 11.700 1 1.400 2.100 3 3.700 2.900 1.500-.1 2-.9 3.800-.9s2.300.9 3.800.9c1.600 0 2.600-1.400 3.600-2.800 1.100-1.600 1.600-3.200 1.600-3.300-.1 0-3.100-1.200-3.100-4.700z"/><path d="M24.300 11.900c.8-1 1.400-2.400 1.200-3.800-1.200.1-2.600.8-3.500 1.800-.8.900-1.400 2.300-1.200 3.600 1.300.1 2.700-.6 3.500-1.600z"/></g></svg>
<svg style="position:absolute;left:1626.2px;top:1377.1px" width="34" height="34" viewBox="-17 -17 34 34"><circle r="16" fill="#4D5A4A"/><path d="M-13.86 -8.00 A16 16 0 0 1 13.86 -8.00 L0.00 -8.00 A8.0 8.0 0 0 0 -6.93 4.00 Z" fill="#8A2435"/><path d="M13.86 -8.00 A16 16 0 0 1 -0.00 16.00 L6.93 4.00 A8.0 8.0 0 0 0 0.00 -8.00 Z" fill="#94702C"/><path d="M-0.00 16.00 A16 16 0 0 1 -13.86 -8.00 L-6.93 4.00 A8.0 8.0 0 0 0 6.93 4.00 Z" fill="#4A6040"/><circle r="8.0" fill="#9C96AC"/><circle r="6.24" fill="#134C90"/></svg>
<svg style="position:absolute;left:2418.8px;top:1373.7px" width="28" height="30" viewBox="-2 -2 28 30"><path d="M13.7 0.6 C10 2.5 7.4 5.5 7.4 8.5 L7.4 13.6 L3 7.8 C1.2 10 0.4 12.6 0.4 15.4 C0.4 21 5.6 25 11.6 25 C17.8 25 22.6 20.6 22.2 14.6 C22 11 21.6 8 20.9 5 L14 10.6 Z" fill="none" stroke="#951D32" stroke-width="2" stroke-linejoin="round"/></svg>
<div style="position:absolute;left:2571px;top:1374px;width:8px;height:40px;background:#4B2F9E"></div>
<div style="position:absolute;left:2587px;top:1374px;width:8px;height:40px;background:#4B2F9E"></div>
<div style="position:absolute;left:2603px;top:1374px;width:8px;height:40px;background:#4B2F9E"></div>
<div style="position:absolute;left:2619px;top:1374px;width:8px;height:40px;background:#4B2F9E"></div>
<div style="position:absolute;left:2635px;top:1374px;width:8px;height:40px;background:#4B2F9E"></div>
<div style="position:absolute;left:2651px;top:1374px;width:8px;height:40px;background:#4B2F9E"></div>
<div style="position:absolute;left:2667px;top:1374px;width:8px;height:40px;background:#4B2F9E"></div>
<div style="position:absolute;left:2683px;top:1374px;width:8px;height:40px;background:#4B2F9E"></div>
<div style="position:absolute;left:2699px;top:1374px;width:8px;height:40px;background:#4B2F9E"></div>
<div style="position:absolute;left:2715px;top:1374px;width:8px;height:40px;background:#4B2F9E"></div>
<div style="position:absolute;left:60px;top:1452px;width:2700px;height:2px;background:#837B93"></div>
<div style="position:absolute;left:0px;top:1410px;width:2818px;height:56px;background:linear-gradient(to bottom,rgba(50,35,70,0),rgba(50,35,70,0.09))"></div>
<svg style="position:absolute;left:2810px;top:1458px" width="8" height="8" viewBox="0 0 8 8"><path d="M8 2.500L8 8L3.500 8Z" fill="#1F1830"/></svg>
<div style="position:absolute;left:648px;top:144px;width:1852px;height:118px;box-sizing:border-box;border:8px solid #584AC0;border-radius:17px 17px 17px 0;background:#fff"></div>
<div style="position:absolute;left:648px;top:254px;width:516px;height:136px;box-sizing:border-box;border:8px solid #584AC0;border-radius:0 0 21px 21px;background:#6C5FC7"></div>
<div style="position:absolute;left:648px;top:254px;width:30px;height:8px;background:#584AC0"></div>
<div style="position:absolute;left:662px;top:164px;width:1819px;height:80px;box-sizing:border-box;border:4px solid #8567FF;border-radius:17px;background:#F7F6FA;box-shadow:inset 0 0 0 2px #E0DCEF, inset 0 6px 0 0 #E0DCEF"></div>
<svg style="position:absolute;left:692px;top:190px" width="28" height="28" viewBox="0 0 28 28"><circle cx="11.800" cy="11.500" r="8.800" fill="none" stroke="#4A4556" stroke-width="2.1"/><path d="M18.300 18L25.300 24.800" stroke="#4A4556" stroke-width="2.1" stroke-linecap="round"/></svg>
<div style="position:absolute;left:750px;top:180px;width:393.5px;height:47.5px;box-sizing:border-box;border:2px dotted #D6D1E8;border-radius:7px"></div>
<div style="position:absolute;left:1162px;top:180px;width:291px;height:47.5px;box-sizing:border-box;border:2px dotted #D6D1E8;border-radius:7px"></div>
<svg style="position:absolute;left:1115.0px;top:198.0px" width="14.6" height="14.6" viewBox="-7.3 -7.3 14.6 14.6"><path d="M-5.3 -5.3L5.3 5.3M5.3 -5.3L-5.3 5.3" stroke="#4A4556" stroke-width="1.8" stroke-linecap="round"/></svg>
<svg style="position:absolute;left:1423.9px;top:198.0px" width="14.6" height="14.6" viewBox="-7.3 -7.3 14.6 14.6"><path d="M-5.3 -5.3L5.3 5.3M5.3 -5.3L-5.3 5.3" stroke="#4A4556" stroke-width="1.8" stroke-linecap="round"/></svg>
<svg style="position:absolute;left:2419.7px;top:192.7px" width="22.6" height="22.6" viewBox="-11.3 -11.3 22.6 22.6"><path d="M-9.3 -9.3L9.3 9.3M9.3 -9.3L-9.3 9.3" stroke="#4A4556" stroke-width="2.1" stroke-linecap="round"/></svg>
<div style="position:absolute;left:1461.5px;top:188px;width:2px;height:32px;background:#181225"></div>
<span style="position:absolute;left:59.0px;top:45px;font:700 51px/1 'Liberation Sans',sans-serif;letter-spacing:-0.587px;color:#1C1428;white-space:pre;">Session Replay</span>
<span style="position:absolute;left:138.8px;top:185px;font:700 28px/1 'Liberation Sans',sans-serif;letter-spacing:1.147px;color:#1C1428;white-space:pre;">react</span>
<span style="position:absolute;left:309.8px;top:185px;font:700 28px/1 'Liberation Sans',sans-serif;letter-spacing:-0.759px;color:#1C1428;white-space:pre;">All Envs</span>
<span style="position:absolute;left:512.6px;top:185px;font:700 28px/1 'Liberation Sans',sans-serif;letter-spacing:0.128px;color:#1C1428;white-space:pre;">14D</span>
<span style="position:absolute;left:2554.0px;top:185px;font:700 28px/1 'Liberation Sans',sans-serif;letter-spacing:-0.175px;color:#1C1428;white-space:pre;">Hide Widgets</span>
<span style="position:absolute;left:151.4px;top:300px;font:700 32px/1 'Liberation Sans',sans-serif;letter-spacing:-0.078px;color:#1C1428;white-space:pre;">Most Dead Clicks</span>
<span style="position:absolute;left:152.6px;top:341px;font:400 28px/1 'Liberation Sans',sans-serif;letter-spacing:0.824px;color:#3D3A4C;white-space:pre;">Suggested replays to watch</span>
<span style="position:absolute;left:161.0px;top:419px;font:400 28px/1 'Liberation Sans',sans-serif;letter-spacing:1.359px;color:#46159A;white-space:pre;">input.complete-checkout-btn.sentry-unmask</span>
<span style="position:absolute;left:1234.4px;top:419px;font:400 28px/1 'Liberation Sans',sans-serif;letter-spacing:-0.753px;color:#3D3A4C;white-space:pre;">14811</span>
<span style="position:absolute;left:160.4px;top:498px;font:400 28px/1 'Liberation Sans',sans-serif;letter-spacing:0.000px;color:#46159A;white-space:pre;">a</span>
<span style="position:absolute;left:1262.5px;top:498px;font:400 28px/1 'Liberation Sans',sans-serif;letter-spacing:-1.022px;color:#3D3A4C;white-space:pre;">174</span>
<span style="position:absolute;left:160.4px;top:576px;font:400 28px/1 'Liberation Sans',sans-serif;letter-spacing:1.320px;color:#46159A;white-space:pre;">a#home-link.sentry-unmask</span>
<span style="position:absolute;left:1291.0px;top:577px;font:400 28px/1 'Liberation Sans',sans-serif;letter-spacing:0.000px;color:#3D3A4C;white-space:pre;">2</span>
<span style="position:absolute;left:1519.7px;top:300px;font:700 32px/1 'Liberation Sans',sans-serif;letter-spacing:-0.165px;color:#1C1428;white-space:pre;">Most Rage Clicks</span>
<span style="position:absolute;left:1520.9px;top:341px;font:400 28px/1 'Liberation Sans',sans-serif;letter-spacing:0.828px;color:#3D3A4C;white-space:pre;">Suggested replays to watch</span>
<span style="position:absolute;left:1528.5px;top:419px;font:400 28px/1 'Liberation Sans',sans-serif;letter-spacing:1.374px;color:#46159A;white-space:pre;">input.complete-checkout-btn.sentry-unmask</span>
<span style="position:absolute;left:2598.0px;top:419px;font:400 28px/1 'Liberation Sans',sans-serif;letter-spacing:-0.247px;color:#3D3A4C;white-space:pre;">14787</span>
<span style="position:absolute;left:165.2px;top:688px;font:700 28px/1 'Liberation Sans',sans-serif;letter-spacing:-0.390px;color:#1C1428;white-space:pre;">Replay</span>
<span style="position:absolute;left:1518.1px;top:688px;font:700 28px/1 'Liberation Sans',sans-serif;letter-spacing:-1.500px;color:#3D3A4C;white-space:pre;">OS</span>
<span style="position:absolute;left:1623.0px;top:688px;font:700 28px/1 'Liberation Sans',sans-serif;letter-spacing:0.059px;color:#3D3A4C;white-space:pre;">Browser</span>
<span style="position:absolute;left:1799.7px;top:688px;font:700 28px/1 'Liberation Sans',sans-serif;letter-spacing:0.557px;color:#3D3A4C;white-space:pre;">Duration</span>
<span style="position:absolute;left:1983.2px;top:688px;font:700 28px/1 'Liberation Sans',sans-serif;letter-spacing:-0.042px;color:#3D3A4C;white-space:pre;">Dead clicks</span>
<span style="position:absolute;left:2201.1px;top:688px;font:700 28px/1 'Liberation Sans',sans-serif;letter-spacing:-0.162px;color:#3D3A4C;white-space:pre;">Rage clicks</span>
<span style="position:absolute;left:2418.0px;top:688px;font:700 28px/1 'Liberation Sans',sans-serif;letter-spacing:-0.034px;color:#3D3A4C;white-space:pre;">Errors</span>
<span style="position:absolute;left:2567.4px;top:688px;font:700 28px/1 'Liberation Sans',sans-serif;letter-spacing:0.561px;color:#3D3A4C;white-space:pre;">Activity</span>
<span style="position:absolute;left:180.5px;top:789px;font:700 25px/1 'Liberation Sans',sans-serif;letter-spacing:0.000px;color:#1C1428;white-space:pre;">V</span>
<span style="position:absolute;left:230.3px;top:770px;font:700 28px/1 'Liberation Sans',sans-serif;letter-spacing:-0.118px;color:#1C1428;white-space:pre;">vwi@example.com</span>
<span style="position:absolute;left:261.4px;top:809px;font:400 24px/1 'Liberation Sans',sans-serif;letter-spacing:0.978px;color:#3D3A4C;white-space:pre;">react</span>
<span style="position:absolute;left:328.0px;top:809px;font:400 24px/1 'Liberation Sans',sans-serif;letter-spacing:1.131px;color:#3D3A4C;white-space:pre;">88d3ec87</span>
<span style="position:absolute;left:482.5px;top:809px;font:400 24px/1 'Liberation Sans',sans-serif;letter-spacing:0.649px;color:#3D3A4C;white-space:pre;text-decoration:underline dotted #5A566A 2px;text-underline-offset:3px;">5 minutes ago</span>
<span style="position:absolute;left:1799.7px;top:787px;font:400 28px/1 'Liberation Sans',sans-serif;letter-spacing:1.701px;color:#1C1428;white-space:pre;">04:41</span>
<span style="position:absolute;left:1983.2px;top:787px;font:400 28px/1 'Liberation Sans',sans-serif;letter-spacing:0.000px;color:#1C1428;white-space:pre;">0</span>
<span style="position:absolute;left:2201.3px;top:787px;font:400 28px/1 'Liberation Sans',sans-serif;letter-spacing:0.000px;color:#1C1428;white-space:pre;">0</span>
<span style="position:absolute;left:2455.0px;top:787px;font:400 28px/1 'Liberation Sans',sans-serif;letter-spacing:2.428px;color:#1C1428;white-space:pre;">23</span>
<span style="position:absolute;left:180.0px;top:908px;font:700 25px/1 'Liberation Sans',sans-serif;letter-spacing:0.000px;color:#9F99AB;white-space:pre;">B</span>
<span style="position:absolute;left:229.3px;top:889px;font:700 28px/1 'Liberation Sans',sans-serif;letter-spacing:0.067px;color:#1C1428;white-space:pre;">btd@example.com</span>
<span style="position:absolute;left:261.4px;top:927px;font:400 24px/1 'Liberation Sans',sans-serif;letter-spacing:0.978px;color:#3D3A4C;white-space:pre;">react</span>
<span style="position:absolute;left:328.0px;top:927px;font:400 24px/1 'Liberation Sans',sans-serif;letter-spacing:0.937px;color:#3D3A4C;white-space:pre;">cc423557</span>
<span style="position:absolute;left:479.8px;top:927px;font:400 24px/1 'Liberation Sans',sans-serif;letter-spacing:0.640px;color:#3D3A4C;white-space:pre;text-decoration:underline dotted #5A566A 2px;text-underline-offset:3px;">5 minutes ago</span>
<span style="position:absolute;left:1799.7px;top:906px;font:400 28px/1 'Liberation Sans',sans-serif;letter-spacing:1.701px;color:#1C1428;white-space:pre;">05:02</span>
<span style="position:absolute;left:1983.2px;top:906px;font:400 28px/1 'Liberation Sans',sans-serif;letter-spacing:0.000px;color:#1C1428;white-space:pre;">0</span>
<span style="position:absolute;left:2201.3px;top:906px;font:400 28px/1 'Liberation Sans',sans-serif;letter-spacing:0.000px;color:#1C1428;white-space:pre;">0</span>
<span style="position:absolute;left:2454.0px;top:906px;font:400 28px/1 'Liberation Sans',sans-serif;letter-spacing:3.428px;color:#1C1428;white-space:pre;">19</span>
<span style="position:absolute;left:181.5px;top:1026px;font:700 25px/1 'Liberation Sans',sans-serif;letter-spacing:0.000px;color:#9F99AB;white-space:pre;">T</span>
<span style="position:absolute;left:230.3px;top:1007px;font:700 28px/1 'Liberation Sans',sans-serif;letter-spacing:-0.007px;color:#1C1428;white-space:pre;">tya@example.com</span>
<span style="position:absolute;left:261.4px;top:1046px;font:400 24px/1 'Liberation Sans',sans-serif;letter-spacing:0.978px;color:#3D3A4C;white-space:pre;">react</span>
<span style="position:absolute;left:329.0px;top:1046px;font:400 24px/1 'Liberation Sans',sans-serif;letter-spacing:1.499px;color:#3D3A4C;white-space:pre;">0b4f6cb8</span>
<span style="position:absolute;left:478.4px;top:1046px;font:400 24px/1 'Liberation Sans',sans-serif;letter-spacing:0.611px;color:#3D3A4C;white-space:pre;text-decoration:underline dotted #5A566A 2px;text-underline-offset:3px;">10 minutes ago</span>
<span style="position:absolute;left:1799.7px;top:1024px;font:400 28px/1 'Liberation Sans',sans-serif;letter-spacing:1.701px;color:#1C1428;white-space:pre;">04:09</span>
<span style="position:absolute;left:1983.2px;top:1024px;font:400 28px/1 'Liberation Sans',sans-serif;letter-spacing:0.000px;color:#1C1428;white-space:pre;">0</span>
<span style="position:absolute;left:2201.3px;top:1024px;font:400 28px/1 'Liberation Sans',sans-serif;letter-spacing:0.000px;color:#1C1428;white-space:pre;">0</span>
<span style="position:absolute;left:2454.0px;top:1024px;font:400 28px/1 'Liberation Sans',sans-serif;letter-spacing:3.428px;color:#1C1428;white-space:pre;">18</span>
<span style="position:absolute;left:179.5px;top:1145px;font:700 25px/1 'Liberation Sans',sans-serif;letter-spacing:0.000px;color:#A49EB0;white-space:pre;">K</span>
<span style="position:absolute;left:229.3px;top:1126px;font:700 28px/1 'Liberation Sans',sans-serif;letter-spacing:-0.203px;color:#1C1428;white-space:pre;">kes@example.com</span>
<span style="position:absolute;left:261.4px;top:1164px;font:400 24px/1 'Liberation Sans',sans-serif;letter-spacing:0.978px;color:#3D3A4C;white-space:pre;">react</span>
<span style="position:absolute;left:329.0px;top:1164px;font:400 24px/1 'Liberation Sans',sans-serif;letter-spacing:0.764px;color:#3D3A4C;white-space:pre;">fa7bba6f</span>
<span style="position:absolute;left:468.6px;top:1164px;font:400 24px/1 'Liberation Sans',sans-serif;letter-spacing:0.418px;color:#3D3A4C;white-space:pre;text-decoration:underline dotted #5A566A 2px;text-underline-offset:3px;">15 minutes ago</span>
<span style="position:absolute;left:1799.7px;top:1143px;font:400 28px/1 'Liberation Sans',sans-serif;letter-spacing:1.701px;color:#1C1428;white-space:pre;">02:38</span>
<span style="position:absolute;left:1983.2px;top:1143px;font:400 28px/1 'Liberation Sans',sans-serif;letter-spacing:0.000px;color:#1C1428;white-space:pre;">0</span>
<span style="position:absolute;left:2201.3px;top:1143px;font:400 28px/1 'Liberation Sans',sans-serif;letter-spacing:0.000px;color:#1C1428;white-space:pre;">0</span>
<span style="position:absolute;left:2454.0px;top:1143px;font:400 28px/1 'Liberation Sans',sans-serif;letter-spacing:3.428px;color:#1C1428;white-space:pre;">13</span>
<span style="position:absolute;left:180.5px;top:1264px;font:700 25px/1 'Liberation Sans',sans-serif;letter-spacing:0.000px;color:#1C1428;white-space:pre;">X</span>
<span style="position:absolute;left:230.3px;top:1244px;font:700 28px/1 'Liberation Sans',sans-serif;letter-spacing:-0.193px;color:#1C1428;white-space:pre;">xgm@example.com</span>
<span style="position:absolute;left:261.4px;top:1283px;font:400 24px/1 'Liberation Sans',sans-serif;letter-spacing:0.978px;color:#3D3A4C;white-space:pre;">react</span>
<span style="position:absolute;left:328.0px;top:1283px;font:400 24px/1 'Liberation Sans',sans-serif;letter-spacing:0.799px;color:#3D3A4C;white-space:pre;">1d4cdbfc</span>
<span style="position:absolute;left:471.5px;top:1283px;font:400 24px/1 'Liberation Sans',sans-serif;letter-spacing:0.441px;color:#3D3A4C;white-space:pre;text-decoration:underline dotted #5A566A 2px;text-underline-offset:3px;">15 minutes ago</span>
<span style="position:absolute;left:1799.7px;top:1262px;font:400 28px/1 'Liberation Sans',sans-serif;letter-spacing:1.701px;color:#1C1428;white-space:pre;">05:13</span>
<span style="position:absolute;left:1983.2px;top:1262px;font:400 28px/1 'Liberation Sans',sans-serif;letter-spacing:0.000px;color:#1C1428;white-space:pre;">0</span>
<span style="position:absolute;left:2201.3px;top:1262px;font:400 28px/1 'Liberation Sans',sans-serif;letter-spacing:0.000px;color:#1C1428;white-space:pre;">0</span>
<span style="position:absolute;left:2455.0px;top:1262px;font:400 28px/1 'Liberation Sans',sans-serif;letter-spacing:2.428px;color:#1C1428;white-space:pre;">25</span>
<span style="position:absolute;left:181.0px;top:1382px;font:700 25px/1 'Liberation Sans',sans-serif;letter-spacing:0.000px;color:#1C1428;white-space:pre;">S</span>
<span style="position:absolute;left:230.3px;top:1363px;font:700 28px/1 'Liberation Sans',sans-serif;letter-spacing:-0.232px;color:#1C1428;white-space:pre;">sjy@example.com</span>
<span style="position:absolute;left:261.4px;top:1402px;font:400 24px/1 'Liberation Sans',sans-serif;letter-spacing:0.978px;color:#3D3A4C;white-space:pre;">react</span>
<span style="position:absolute;left:328.0px;top:1402px;font:400 24px/1 'Liberation Sans',sans-serif;letter-spacing:0.331px;color:#3D3A4C;white-space:pre;">a7bb9c27</span>
<span style="position:absolute;left:475.9px;top:1402px;font:400 24px/1 'Liberation Sans',sans-serif;letter-spacing:0.749px;color:#3D3A4C;white-space:pre;text-decoration:underline dotted #5A566A 2px;text-underline-offset:3px;">22 minutes ago</span>
<span style="position:absolute;left:1799.7px;top:1380px;font:400 28px/1 'Liberation Sans',sans-serif;letter-spacing:1.701px;color:#1C1428;white-space:pre;">05:29</span>
<span style="position:absolute;left:1983.2px;top:1380px;font:400 28px/1 'Liberation Sans',sans-serif;letter-spacing:0.000px;color:#1C1428;white-space:pre;">0</span>
<span style="position:absolute;left:2201.3px;top:1380px;font:400 28px/1 'Liberation Sans',sans-serif;letter-spacing:0.000px;color:#1C1428;white-space:pre;">0</span>
<span style="position:absolute;left:2455.0px;top:1380px;font:400 28px/1 'Liberation Sans',sans-serif;letter-spacing:2.428px;color:#1C1428;white-space:pre;">30</span>
<span style="position:absolute;left:703.0px;top:300px;font:400 47px/1 'DejaVu Sans Mono',monospace;letter-spacing:0.796px;color:#FFFFFF;white-space:pre;-webkit-text-stroke:0.8px #fff;">Search Filters</span>
<span style="position:absolute;left:762.0px;top:191px;font:400 28px/1 'Liberation Sans',sans-serif;letter-spacing:0.792px;color:#181225;white-space:pre;">browser.name</span>
<span style="position:absolute;left:962.4px;top:191px;font:400 28px/1 'Liberation Sans',sans-serif;letter-spacing:0.379px;color:#4A4556;white-space:pre;">is</span>
<span style="position:absolute;left:995.0px;top:191px;font:400 28px/1 'Liberation Sans',sans-serif;letter-spacing:0.597px;color:#6A1FE8;white-space:pre;">Chrome</span>
<span style="position:absolute;left:1173.8px;top:191px;font:400 28px/1 'Liberation Sans',sans-serif;letter-spacing:1.610px;color:#181225;white-space:pre;">count_errors</span>
<span style="position:absolute;left:1364.5px;top:191px;font:400 28px/1 'Liberation Sans',sans-serif;letter-spacing:0.000px;color:#4A4556;white-space:pre;">&gt;</span>
<span style="position:absolute;left:1390.4px;top:191px;font:400 28px/1 'Liberation Sans',sans-serif;letter-spacing:0.000px;color:#6A1FE8;white-space:pre;">2</span>
</body></html>
